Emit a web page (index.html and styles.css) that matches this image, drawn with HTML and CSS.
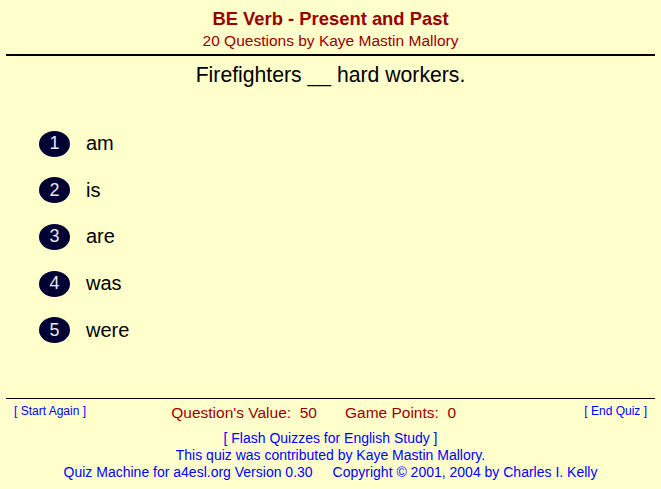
FILE: index.html
```html
<!DOCTYPE html>
<html>
<head>
<meta charset="utf-8">
<link rel="stylesheet" href="styles.css">
</head>
<body>
<div class="page">
  <header class="head">
    <div class="title">BE Verb - Present and Past</div>
    <div class="subtitle">20 Questions by Kaye Mastin Mallory</div>
  </header>
  <div class="rule"></div>
  <div class="question">Firefighters __ hard workers.</div>
  <ol class="options">
    <li class="option"><span class="num">1</span><span class="ans">am</span></li>
    <li class="option"><span class="num">2</span><span class="ans">is</span></li>
    <li class="option"><span class="num">3</span><span class="ans">are</span></li>
    <li class="option"><span class="num">4</span><span class="ans">was</span></li>
    <li class="option"><span class="num">5</span><span class="ans">were</span></li>
  </ol>
  <div class="spacer"></div>
  <div class="rule"></div>
  <div class="scorebar">
    <span class="link small">[ Start Again ]</span>
    <span class="score"><span>Question's Value:&nbsp; 50</span><span>Game Points:&nbsp; 0</span></span>
    <span class="link small">[ End Quiz ]</span>
  </div>
  <footer class="foot">
    <div class="line">[ Flash Quizzes for English Study ]</div>
    <div class="line">This quiz was contributed by Kaye Mastin Mallory.</div>
    <div class="line"><span>Quiz Machine for a4esl.org Version 0.30</span><span>Copyright © 2001, 2004 by Charles I. Kelly</span></div>
  </footer>
</div>
</body>
</html>
```
FILE: styles.css
```css
html, body {
  margin: 0;
  padding: 0;
  background: #ffffcc;
}
body {
  font-family: "Liberation Sans", Arial, sans-serif;
  width: 661px;
  height: 489px;
  overflow: hidden;
}
.page {
  display: flex;
  flex-direction: column;
  height: 489px;
}
.head {
  text-align: center;
  padding-top: 8px;
}
.title {
  color: #990000;
  font-weight: bold;
  font-size: 18.4px;
  line-height: 20px;
  margin-top: 1px;
}
.subtitle {
  color: #990000;
  font-size: 15.5px;
  line-height: 20px;
  margin-top: 2px;
}
.rule {
  height: 1.5px;
  background: #000;
  margin: 0 6px;
}
.head + .rule { margin-top: 3px; }
.question {
  text-align: center;
  font-size: 21.2px;
  line-height: 24px;
  margin-top: 7px;
  color: #000;
}
.options {
  list-style: none;
  margin: 34px 0 0 39px;
  padding: 0;
}
.option {
  display: flex;
  align-items: center;
  height: 46.6px;
}
.num {
  width: 31px;
  height: 26px;
  border-radius: 50%;
  background: #000033;
  color: #e8e8f0;
  font-size: 18px;
  display: flex;
  align-items: center;
  justify-content: center;
}
.ans {
  margin-left: 16px;
  font-size: 20px;
  color: #000;
}
.spacer { flex: 1; }
.scorebar {
  display: flex;
  justify-content: space-between;
  align-items: flex-start;
  padding: 4px 14px 0 14px;
  height: 22px;
}
.small {
  font-size: 12px;
  line-height: 16px;
}
.link { color: #0000ff; }
.score {
  color: #990000;
  font-size: 15.5px;
  line-height: 20px;
  display: flex;
  gap: 28px;
  margin-left: 83px;
  margin-right: 126px;
}
.foot {
  text-align: center;
  color: #0000ff;
  font-size: 14px;
  line-height: 17px;
  padding-top: 5px;
  padding-bottom: 8px;
}
.foot .line span + span { margin-left: 20px; }
```
